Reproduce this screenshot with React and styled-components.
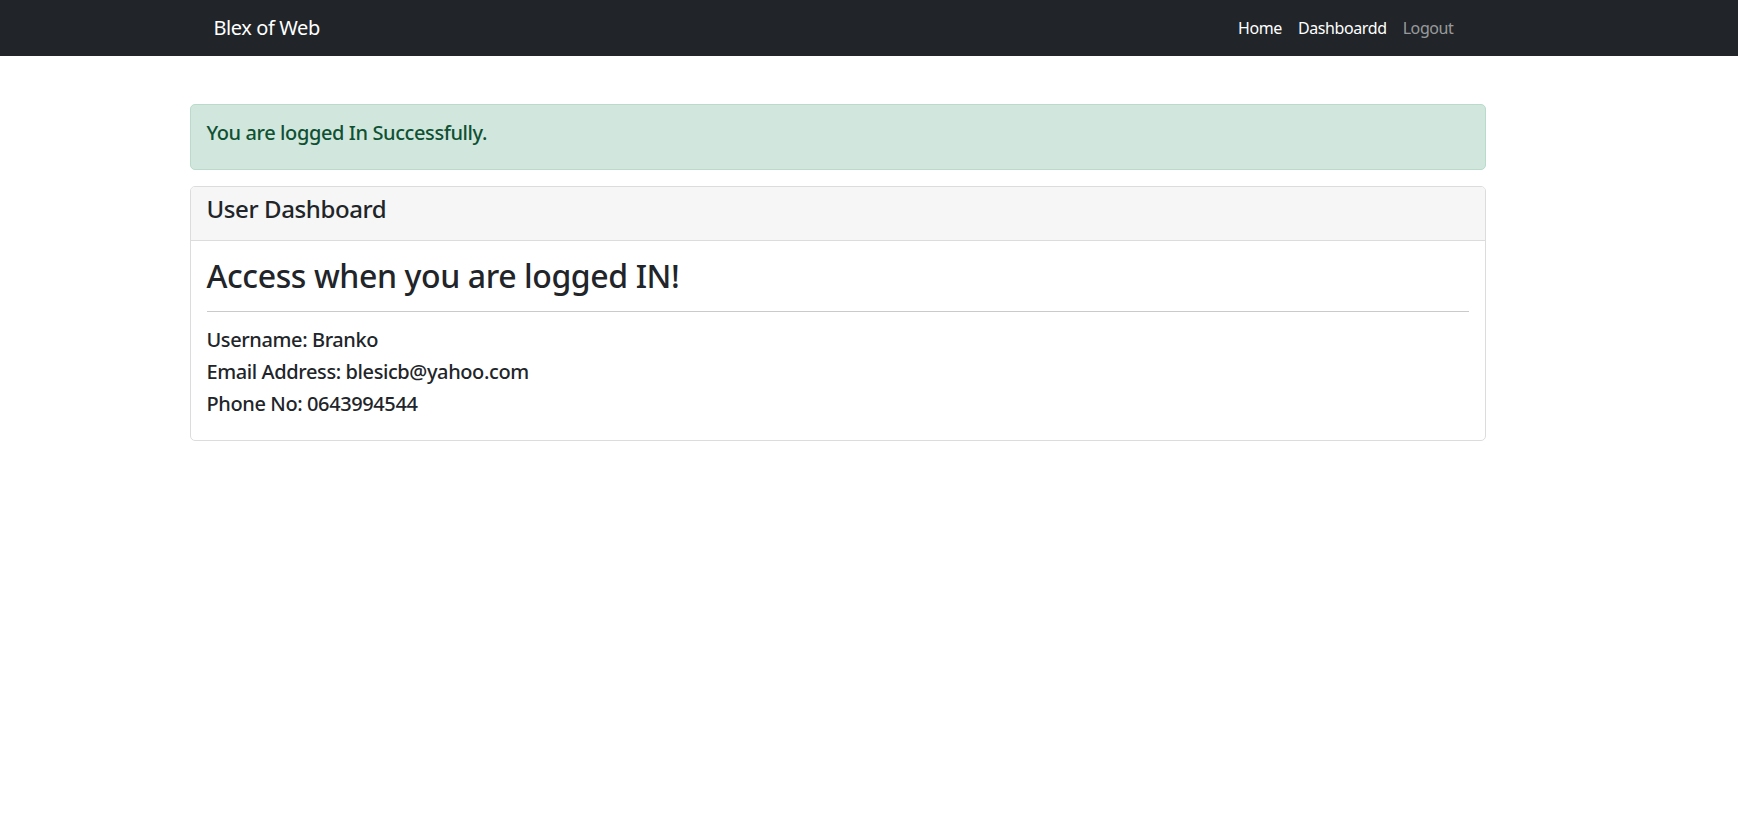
import styled, { createGlobalStyle } from "styled-components";

const links = [
  { label: "Home", href: "#home", active: true },
  { label: "Dashboardd", href: "#dashboard", active: true },
  { label: "Logout", href: "#logout", active: false },
];

const user = [
  { label: "Username", value: "Branko" },
  { label: "Email Address", value: "blesicb@yahoo.com" },
  { label: "Phone No", value: "0643994544" },
];

const GlobalStyle = createGlobalStyle`
  *, *::before, *::after {
    box-sizing: border-box;
  }

  body {
    margin: 0;
    font-family: "Noto Sans", "Open Sans", sans-serif;
    font-size: 16px;
    line-height: 1.5;
    letter-spacing: -0.025em;
    color: #212529;
    background: #fff;
  }
`;

const Shell = styled.div`
  width: 1675px;
`;

const Container = styled.div`
  max-width: 1320px;
  margin: 0 auto;
  padding: 0 12px;
`;

const NavBar = styled.nav`
  background: #212529;
  padding: 8px 0;
`;

const NavInner = styled.div`
  display: flex;
  align-items: center;
  justify-content: space-between;
  padding: 0 24px;
`;

const Brand = styled.a`
  padding: 5px 0;
  font-size: 20px;
  line-height: 30px;
  color: #fff;
  text-decoration: none;
`;

const NavList = styled.div`
  display: flex;
  align-items: center;
`;

const NavLink = styled.a`
  padding: 8px;
  line-height: 24px;
  color: ${({ active }) => (active ? "#fff" : "rgba(255, 255, 255, 0.55)")};
  text-decoration: none;
`;

const Main = styled.main`
  padding-top: 48px;
`;

const Alert = styled.div`
  margin-bottom: 16px;
  padding: 16px;
  background: #d1e7dd;
  border: 1px solid #badbcc;
  border-radius: 5px;
  color: #0f5132;
`;

const Card = styled.section`
  border: 1px solid #dcdcdc;
  border-radius: 5px;
  overflow: hidden;
`;

const CardHeader = styled.div`
  padding: 8px 16px;
  background: #f6f6f6;
  border-bottom: 1px solid #dcdcdc;
`;

const CardBody = styled.div`
  padding: 16px;
`;

const Heading = styled.h2`
  margin: 0 0 8px;
  font-size: ${({ size }) => size}px;
  line-height: 1.2;
  font-weight: 500;
`;

const Rule = styled.hr`
  margin: 16px 0;
  border: 0;
  border-top: 1px solid #c9cacb;
`;

export default function App() {
  return (
    <>
      <GlobalStyle />
      <NavBar>
        <Shell>
          <Container>
            <NavInner>
              <Brand href="#home">Blex of Web</Brand>
              <NavList>
                {links.map((link) => (
                  <NavLink key={link.label} href={link.href} active={link.active}>
                    {link.label}
                  </NavLink>
                ))}
              </NavList>
            </NavInner>
          </Container>
        </Shell>
      </NavBar>

      <Shell>
        <Container>
          <Main>
            <Alert>
              <Heading as="h5" size={20}>You are logged In Successfully.</Heading>
            </Alert>

            <Card>
              <CardHeader>
                <Heading as="h4" size={24}>User Dashboard</Heading>
              </CardHeader>
              <CardBody>
                <Heading size={32}>Access when you are logged IN!</Heading>
                <Rule />
                {user.map((row) => (
                  <Heading as="h5" size={20} key={row.label}>
                    {row.label}: {row.value}
                  </Heading>
                ))}
              </CardBody>
            </Card>
          </Main>
        </Container>
      </Shell>
    </>
  );
}
